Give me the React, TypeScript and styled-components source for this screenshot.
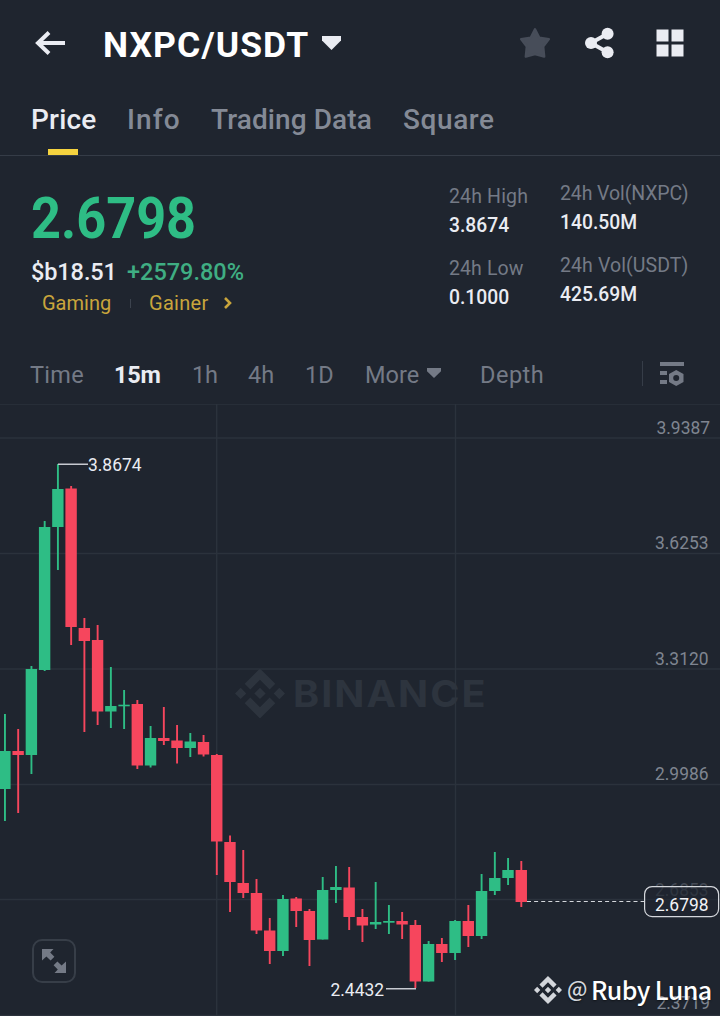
import React from "react";
import styled, { createGlobalStyle } from "styled-components";
import { SiBinance } from "react-icons/si";

const color = {
  bg: "#1f252f",
  text: "#eaecf2",
  muted: "#848a96",
  dim: "#747a86",
  line: "#2b323c",
  green: "#2ebd85",
  red: "#f6465d",
  gold: "#c9a53c",
};

const GlobalStyle = createGlobalStyle`
  * { box-sizing: border-box; }
  body {
    margin: 0;
    background: ${color.bg};
    font-family: Roboto, "Liberation Sans", sans-serif;
    -webkit-font-smoothing: antialiased;
  }
`;

const Screen = styled.main`
  display: flex;
  flex-direction: column;
  width: 720px;
  height: 1016px;
  overflow: hidden;
  background: ${color.bg};
  color: ${color.text};
`;

const Header = styled.header`
  display: flex;
  align-items: center;
  height: 88px;
  padding: 0 36px 2px 35px;
`;

const Pair = styled.h1`
  width: 205px;
  margin: 4px 14px 0 38px;
  font-size: 35.5px;
  font-weight: 700;
  line-height: 44px;
  letter-spacing: 1.1px;
  color: #fff;
  white-space: nowrap;
`;

const Actions = styled.div`
  display: flex;
  align-items: center;
  gap: 34px;
  margin-left: auto;

  svg:last-child {
    margin-left: 7px;
  }
`;

const Tabs = styled.nav`
  display: flex;
  gap: 31px;
  height: 68px;
  padding-left: 31px;
  border-bottom: 1px solid #353c47;
`;

const Tab = styled.a<{ $active?: boolean; $width: number; $spacing: number }>`
  display: flex;
  flex-direction: column;
  justify-content: space-between;
  width: ${(p) => p.$width}px;
  padding-top: 14px;
  font-size: 28px;
  font-weight: 500;
  line-height: 36px;
  letter-spacing: ${(p) => p.$spacing}px;
  white-space: nowrap;
  color: ${(p) => (p.$active ? color.text : color.muted)};
`;

const Indicator = styled.span`
  align-self: center;
  width: 30px;
  height: 6px;
  margin-right: 1px;
  background: #f5d33f;
`;

const Summary = styled.section`
  display: flex;
  height: 190px;
  padding: 0 31px;
`;

const PriceBlock = styled.div`
  display: flex;
  flex-direction: column;
  width: 418px;
  padding-top: 31px;
`;

const LastPrice = styled.div`
  font-size: 57px;
  font-weight: 700;
  line-height: 64px;
  color: ${color.green};
  transform: scaleX(0.917);
  transform-origin: left;
`;

const ChangeRow = styled.div`
  display: flex;
  gap: 11px;
  margin-top: 6px;
  font-size: 23.5px;
  font-weight: 500;
  line-height: 30px;
`;

const Fiat = styled.span`
  width: 85px;
  letter-spacing: -0.1px;
`;

const Change = styled.span`
  letter-spacing: 0;
  color: #3fae83;
`;

const Tags = styled.div`
  display: flex;
  align-items: center;
  margin-top: 3px;
  padding-left: 11px;
  font-size: 20px;
  line-height: 26px;
  color: ${color.gold};
`;

const Tag = styled.span<{ $width: number; $spacing?: number }>`
  width: ${(p) => p.$width}px;
  letter-spacing: ${(p) => p.$spacing ?? 0}px;
  white-space: nowrap;
`;

const TagDivider = styled.i`
  width: 1px;
  height: 9px;
  margin: 0 18px 0 19px;
  background: #3c434e;
`;

const StatColumn = styled.dl<{ $width: number; $top: number }>`
  display: flex;
  flex-direction: column;
  gap: 15px;
  width: ${(p) => p.$width}px;
  margin: 0;
  padding-top: ${(p) => p.$top}px;
`;

const StatLabel = styled.dt<{ $spacing: number }>`
  font-size: 19.5px;
  line-height: 28px;
  letter-spacing: ${(p) => p.$spacing}px;
  color: ${color.dim};
  white-space: nowrap;
`;

const StatValue = styled.dd`
  margin: 0;
  font-size: 19.3px;
  font-weight: 500;
  line-height: 29px;
  letter-spacing: 0;
`;

const Intervals = styled.nav`
  display: flex;
  align-items: center;
  height: 58px;
  padding: 0 36px 0 30px;
`;

const Interval = styled.a<{ $width: number; $gap: number; $active?: boolean; $spacing?: number }>`
  width: ${(p) => p.$width}px;
  margin-right: ${(p) => p.$gap}px;
  font-size: 23.5px;
  font-weight: ${(p) => (p.$active ? 700 : 400)};
  line-height: 30px;
  letter-spacing: ${(p) => p.$spacing ?? 0}px;
  color: ${(p) => (p.$active ? color.text : color.dim)};
  white-space: nowrap;
`;

const MoreToggle = styled.div`
  display: flex;
  align-items: center;
  gap: 9px;
  margin-right: 39px;

  svg {
    margin-bottom: 4px;
  }
`;

const Tools = styled.div`
  display: flex;
  align-items: center;
  gap: 17px;
  margin: 0 0 3px auto;
`;

const ToolDivider = styled.i`
  width: 1px;
  height: 25px;
  background: #363d48;
`;

const ChartArea = styled.section`
  position: relative;
  height: 612px;
`;

const ExpandButton = styled.button`
  position: absolute;
  left: 32px;
  top: 535px;
  display: grid;
  place-items: center;
  width: 44px;
  height: 44px;
  padding: 0;
  border: 2px solid #373e48;
  border-radius: 10px;
  background: transparent;
`;

const Signature = styled.div`
  position: absolute;
  right: 8px;
  top: 570px;
  display: flex;
  align-items: center;
  height: 32px;
  font-family: "Noto Sans CJK SC", "Noto Sans", sans-serif;
  font-size: 25px;
  line-height: 34px;
  color: #d3d6db;
  text-shadow: 0 1px 2px rgba(0, 0, 0, 0.5);
  white-space: nowrap;
`;

const At = styled.span`
  width: 20px;
  margin: 0 4px 4px 5px;
  font-size: 21px;
  font-weight: 500;
`;

const Author = styled.span`
  width: 121px;
  margin-bottom: 2px;
  font-weight: 500;
  letter-spacing: -0.6px;
  color: #fff;
`;

type Candle = [up: 0 | 1, high: number, top: number, bottom: number, low: number];

const candles: Candle[] = [
  [1, 714, 751, 789, 821],
  [0, 729, 751, 755, 813],
  [1, 666, 669, 755, 774],
  [1, 521, 527, 670, 671],
  [1, 464, 489, 527, 570],
  [0, 486, 488.5, 627, 645],
  [0, 618, 628, 641, 732],
  [0, 625, 640, 711.5, 725],
  [1, 667, 706, 711.5, 728],
  [1, 690, 704.7, 706.3, 729],
  [0, 700, 704, 765.5, 769],
  [1, 726, 738, 765.5, 767.5],
  [0, 707, 738, 741, 745],
  [0, 725, 740.5, 748, 763.5],
  [1, 733, 741.5, 748, 757],
  [0, 735, 742, 754.5, 756.5],
  [0, 754, 755, 841.5, 875],
  [0, 835.5, 842, 882, 912],
  [0, 850, 883, 893, 898],
  [0, 879, 893, 930.5, 934],
  [0, 918, 930.5, 951, 964],
  [1, 895, 899, 951, 956],
  [0, 897, 898.5, 911, 927],
  [0, 909, 911, 940, 966],
  [1, 877, 890, 939.5, 939.5],
  [1, 866, 887, 890, 903],
  [0, 867, 887.5, 917, 930],
  [0, 909, 917, 925.5, 942],
  [1, 882, 922, 924.5, 929],
  [1, 905, 921, 922.7, 934],
  [0, 912, 921, 924.5, 939],
  [0, 920, 925, 981.5, 988],
  [1, 941, 944, 981.5, 981.5],
  [0, 938, 944, 953, 962],
  [1, 920, 921, 953, 960],
  [0, 905, 921, 936, 947],
  [1, 874, 891, 936, 939],
  [1, 852, 878, 891, 895],
  [1, 858, 870, 878, 885],
  [0, 861, 870, 902, 907],
];

const gridRows = [404, 438, 553.5, 669, 784.5, 899.5, 1015.5];
const gridColumns = [216.7, 455.5];
const axisLabels = [
  { value: "3.9387", x: 656.5, y: 434 },
  { value: "3.6253", x: 655, y: 549 },
  { value: "3.3120", x: 655, y: 665 },
  { value: "2.9986", x: 655, y: 780 },
  { value: "2.3719", x: 656.5, y: 1009 },
];

const ChartSvg = styled.svg`
  display: block;
  font-family: Roboto, sans-serif;
  font-size: 18.3px;
`;

function CandleChart() {
  return (
    <ChartSvg width="720" height="612" viewBox="0 404 720 612">
      {gridRows.map((y) => (
        <line key={y} x1="0" x2="720" y1={y} y2={y} stroke={color.line} strokeWidth="1.4" />
      ))}
      {gridColumns.map((x) => (
        <line key={x} x1={x} x2={x} y1="404" y2="1016" stroke={color.line} strokeWidth="1.4" />
      ))}
      <SiBinance x="235" y="668.5" size={50} color="#2d343e" />
      <g transform="translate(293 707.3) scale(1.07 1)">
        <text fill="#2d343e" fontFamily="Inter" fontWeight="700" fontSize="37" textLength="180">
          BINANCE
        </text>
      </g>
      {candles.map(([up, high, top, bottom, low], i) => {
        const x = 4.9 + i * 13.24;
        const fill = up ? color.green : color.red;
        return (
          <g key={i} fill={fill}>
            <rect x={x - 0.9} y={high} width="1.9" height={low - high} />
            <rect x={x - 5.7} y={top} width="11.4" height={bottom - top} />
          </g>
        );
      })}
      <path d="M58 464.3H88M386 988.8H416" stroke="#c7cad1" strokeWidth="1.4" />
      <g fill={color.text}>
        <text x="88" y="471" textLength="53.5" lengthAdjust="spacingAndGlyphs">3.8674</text>
        <text x="330.5" y="996" textLength="53.5" lengthAdjust="spacingAndGlyphs">2.4432</text>
      </g>
      <g fill="#7f8591">
        {axisLabels.map((l) => (
          <text key={l.value} x={l.x} y={l.y} textLength="53.5" lengthAdjust="spacingAndGlyphs">
            {l.value}
          </text>
        ))}
      </g>
      <text x="655" y="896" fill="#444a55" textLength="53.5" lengthAdjust="spacingAndGlyphs">2.6853</text>
      <path d="M527 901.5H644" stroke="#d4d7dc" strokeWidth="1.2" strokeDasharray="4 3.1" />
      <rect x="644.6" y="886.6" width="74" height="30" rx="7.5" fill={color.bg} fillOpacity="0.55" stroke="#d4d7dc" strokeWidth="1.2" />
      <text x="655" y="911" fill="#f2f3f6" textLength="53.5" lengthAdjust="spacingAndGlyphs">2.6798</text>
    </ChartSvg>
  );
}

const BackIcon = () => (
  <svg width="30" height="24" viewBox="0 0 30 24" fill="none" stroke="#eaecf2" strokeWidth="4">
    <path d="M30 12H3M14 1.5L3 12l11 10.5" />
  </svg>
);

const Caret = ({ width, height, fill }: { width: number; height: number; fill: string }) => (
  <svg width={width} height={height} viewBox="0 0 18 14" preserveAspectRatio="none" fill={fill}>
    <path d="M0 0H18V4.5L9 14L0 4.5Z" />
  </svg>
);

const StarIcon = () => (
  <svg width="32" height="32" viewBox="0 0 32 32" fill="#474d59" stroke="#474d59" strokeWidth="2.4" strokeLinejoin="round">
    <path d="M16 2.2l4.3 8.5 9.6 1.4-5.7 7.4 1 10.1L16 27 6.8 29.6l1-10.1L2.1 12.1l9.6-1.4z" />
  </svg>
);

const ShareIcon = () => (
  <svg width="30" height="32" viewBox="0 0 30 32" fill="#eaecf2">
    <path d="M6 16L23 6.5M6 16l17 9.5" stroke="#eaecf2" strokeWidth="4" />
    <circle cx="6" cy="16" r="6" />
    <circle cx="22.6" cy="6.8" r="6" />
    <circle cx="22.6" cy="25.2" r="6" />
  </svg>
);

const GridIcon = () => (
  <svg width="28" height="28" viewBox="0 0 28 28" fill="#eaecf2">
    <path d="M.5.5h12v12H.5zM15.5.5h12v12h-12zM.5 15.5h12v12H.5zM15.5 15.5h12v12h-12z" />
  </svg>
);

const SettingsIcon = () => (
  <svg width="24" height="24" viewBox="0 0 24 24" fill={color.dim}>
    <path d="M0 0H24V4H0zM0 9H7V13H0zM0 18H7V22H0z" />
    <path fillRule="evenodd" d="M16.2 8L23.5 12v8L16.2 24 9 20v-8zM16.2 13a3 3 0 100 6 3 3 0 000-6z" />
  </svg>
);

const ExpandIcon = () => (
  <svg width="26" height="26" viewBox="0 0 26 26" fill="#747a86">
    <path d="M1 1H12.5L9.2 4.6l4.2 4.2-3.8 3.8-4.2-4.2L1 12.4zM25 25H13.5l3.3-3.6-4.2-4.2 3.8-3.8 4.2 4.2L25 13.6z" />
  </svg>
);

export default function App() {
  return (
    <Screen>
      <GlobalStyle />
      <Header>
        <BackIcon />
        <Pair>NXPC/USDT</Pair>
        <Caret width={19} height={14} fill="#eaecf2" />
        <Actions>
          <StarIcon />
          <ShareIcon />
          <GridIcon />
        </Actions>
      </Header>
      <Tabs>
        <Tab $active $width={65} $spacing={0.2}>
          Price
          <Indicator />
        </Tab>
        <Tab $width={53} $spacing={1.1}>Info</Tab>
        <Tab $width={161} $spacing={0.1}>Trading Data</Tab>
        <Tab $width={90} $spacing={0.6}>Square</Tab>
      </Tabs>
      <Summary>
        <PriceBlock>
          <LastPrice>2.6798</LastPrice>
          <ChangeRow>
            <Fiat>$b18.51</Fiat>
            <Change>+2579.80%</Change>
          </ChangeRow>
          <Tags>
            <Tag $width={69}>Gaming</Tag>
            <TagDivider />
            <Tag $width={75} $spacing={0.3}>Gainer</Tag>
            <svg width="8" height="12" viewBox="0 0 8 12" fill="none" stroke={color.gold} strokeWidth="2.6">
              <path d="M1 1l5 5-5 5" />
            </svg>
          </Tags>
        </PriceBlock>
        <StatColumn $width={111} $top={27}>
          <div>
            <StatLabel $spacing={0.15}>24h High</StatLabel>
            <StatValue>3.8674</StatValue>
          </div>
          <div>
            <StatLabel $spacing={0.1}>24h Low</StatLabel>
            <StatValue>0.1000</StatValue>
          </div>
        </StatColumn>
        <StatColumn $width={129} $top={24}>
          <div>
            <StatLabel $spacing={-0.1}>24h Vol(NXPC)</StatLabel>
            <StatValue>140.50M</StatValue>
          </div>
          <div>
            <StatLabel $spacing={0.1}>24h Vol(USDT)</StatLabel>
            <StatValue>425.69M</StatValue>
          </div>
        </StatColumn>
      </Summary>
      <Intervals>
        <Interval $width={54} $gap={30} $spacing={0.3}>Time</Interval>
        <Interval $width={46} $gap={32} $active $spacing={-0.2}>15m</Interval>
        <Interval $width={25} $gap={31} $spacing={-0.3}>1h</Interval>
        <Interval $width={26} $gap={31}>4h</Interval>
        <Interval $width={28} $gap={32}>1D</Interval>
        <MoreToggle>
          <Interval $width={53} $gap={0}>More</Interval>
          <Caret width={14} height={10} fill={color.dim} />
        </MoreToggle>
        <Interval $width={64} $gap={0} $spacing={0.5}>Depth</Interval>
        <Tools>
          <ToolDivider />
          <SettingsIcon />
        </Tools>
      </Intervals>
      <ChartArea>
        <CandleChart />
        <ExpandButton aria-label="Expand chart">
          <ExpandIcon />
        </ExpandButton>
        <Signature>
          <SiBinance size={28} />
          <At>@</At>
          <Author>Ruby Luna</Author>
        </Signature>
      </ChartArea>
    </Screen>
  );
}
